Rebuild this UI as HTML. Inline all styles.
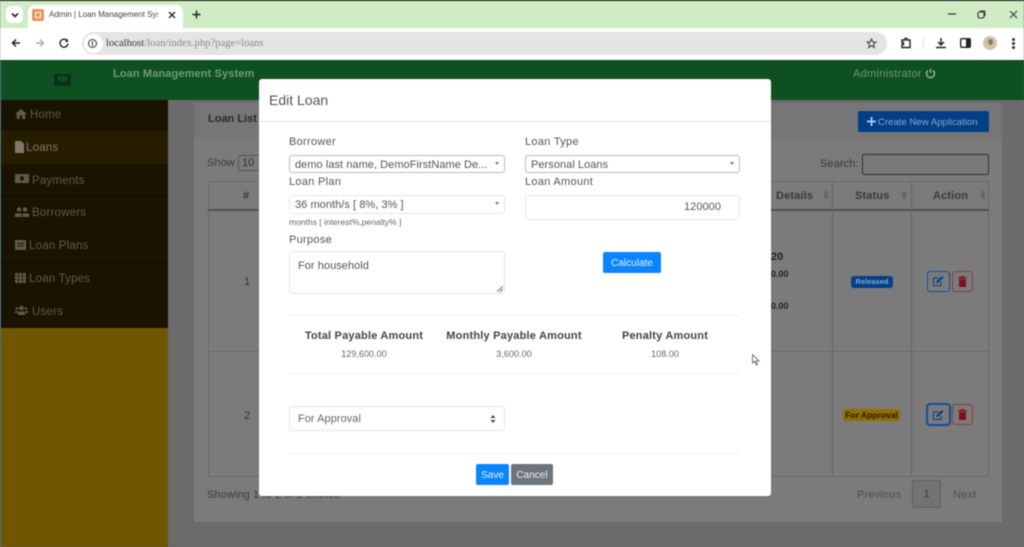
<!DOCTYPE html>
<html lang="en"><head><meta charset="utf-8"><title>Admin | Loan Management System</title>
<style>
html,body{margin:0;padding:0;width:1024px;height:547px;overflow:hidden;background:#6b6b6b}
*{box-sizing:border-box}
body{font-family:"Liberation Sans",sans-serif;position:relative}
.a{position:absolute;white-space:nowrap}
#root{position:absolute;left:0;top:0;width:1024px;height:547px;filter:blur(.45px);overflow:hidden}
.side{left:1px;width:167px;height:33px;background:#1a1300;color:#5f5a4b;font-size:11.5px;font-weight:400;letter-spacing:.2px;line-height:33px}
.side svg{position:absolute;left:14px;top:10px}
.side span{position:absolute;top:0}
.lab{color:#555;font-size:11px;letter-spacing:.3px;line-height:14px}
.in{background:#fff;border:1px solid #e6e6e6;border-radius:3px;color:#555;font-size:11px;letter-spacing:.05px}
.th{color:#3a3a3a;font-weight:700;font-size:11px;letter-spacing:.15px}
.b{font-weight:700;color:#444;font-size:11px;letter-spacing:.2px;text-align:center}
.n{color:#666;font-size:9px;text-align:center;letter-spacing:.05px}
.v{background:#666;width:1px}
.h{background:#f0f0f0;height:1px}
.caret{width:0;height:0;border-left:2.5px solid transparent;border-right:2.5px solid transparent;border-top:3px solid #777}
</style></head><body><div id="root">

<!-- Browser chrome -->
<div class="a" style="left:0;top:0;width:1024px;height:1px;background:#222"></div>
<div class="a" style="left:0;top:1px;width:1024px;height:27px;background:#cfecc4"></div>
<div class="a" style="left:6px;top:6px;width:17px;height:17px;background:#fff;border-radius:5px"></div>
<svg class="a" style="left:11px;top:12px" width="8" height="6" viewBox="0 0 8 6"><path d="M1 1.5L4 4.5L7 1.5" fill="none" stroke="#222" stroke-width="1.6"/></svg>
<div class="a" style="left:28px;top:5px;width:155px;height:24px;background:#fff;border-radius:7px 7px 0 0"></div>
<div class="a" style="left:32px;top:9px;width:12px;height:12px;background:#e8935a;border-radius:2px"></div>
<div class="a" style="left:35px;top:12px;width:6px;height:6px;border:1px solid #fff"></div>
<div class="a" style="left:49px;top:9px;width:109px;overflow:hidden;font-size:8px;line-height:12px;color:#444">Admin | Loan Management System</div>
<svg class="a" style="left:168px;top:11px" width="8" height="8" viewBox="0 0 8 8"><path d="M1 1L7 7M7 1L1 7" stroke="#222" stroke-width="1.3"/></svg>
<svg class="a" style="left:192px;top:10px" width="9" height="9" viewBox="0 0 9 9"><path d="M4.5 .5V8.5M.5 4.5H8.5" stroke="#222" stroke-width="1.4"/></svg>
<svg class="a" style="left:948px;top:13px" width="8" height="2"><path d="M0 1H8" stroke="#333" stroke-width="1.2"/></svg>
<svg class="a" style="left:977px;top:10px" width="9" height="9" viewBox="0 0 9 9"><rect x="1" y="2" width="6" height="6" rx="1.5" fill="none" stroke="#333" stroke-width="1.1"/><path d="M3 1H8V6" fill="none" stroke="#333" stroke-width=".9"/></svg>
<svg class="a" style="left:1009px;top:10px" width="9" height="9" viewBox="0 0 9 9"><path d="M1 1L8 8M8 1L1 8" stroke="#333" stroke-width="1"/></svg>

<div class="a" style="left:0;top:28px;width:1024px;height:32px;background:#fff"></div>
<svg class="a" style="left:11px;top:38px" width="10" height="10" viewBox="0 0 10 10"><path d="M9 5H1.5M5 1.5L1.5 5L5 8.5" fill="none" stroke="#222" stroke-width="1.5"/></svg>
<svg class="a" style="left:35px;top:38px" width="10" height="10" viewBox="0 0 10 10"><path d="M1 5H8.5M5 1.5L8.5 5L5 8.5" fill="none" stroke="#aaa" stroke-width="1.4"/></svg>
<svg class="a" style="left:59px;top:38px" width="10" height="10" viewBox="0 0 10 10"><path d="M8.5 3.2A4 4 0 1 0 9 5.5" fill="none" stroke="#222" stroke-width="1.4"/><path d="M9 .8V4H5.8Z" fill="#222"/></svg>
<div class="a" style="left:82px;top:32px;width:805px;height:23px;background:#e3e5e3;border-radius:12px"></div>
<div class="a" style="left:84px;top:34px;width:19px;height:19px;background:#fff;border-radius:50%"></div>
<div class="a" style="left:88px;top:39px;width:9px;height:9px;border:1.2px solid #333;border-radius:50%"></div>
<div class="a" style="left:92px;top:41px;width:1px;height:5px;background:#333"></div>
<div class="a" style="left:106px;top:38px;font-family:'Liberation Serif',serif;font-size:10.6px;line-height:12px;color:#888"><span style="color:#333">localhost</span>/loan/index.php?page=loans</div>
<svg class="a" style="left:866px;top:38px" width="11" height="11" viewBox="0 0 11 11"><path d="M5.5 1L6.8 4H10L7.5 6.1L8.3 9.5L5.5 7.7L2.7 9.5L3.5 6.1L1 4H4.2Z" fill="none" stroke="#444" stroke-width="1.1"/></svg>
<svg class="a" style="left:900px;top:37px" width="12" height="12" viewBox="0 0 12 12"><path d="M2 3H5V1.5H7V3H10V10.5H2V7.5H3.5V5.5H2Z" fill="none" stroke="#222" stroke-width="1.4"/></svg>
<div class="a" style="left:923px;top:38px;width:1px;height:10px;background:#ddd"></div>
<svg class="a" style="left:935px;top:37px" width="12" height="12" viewBox="0 0 12 12"><path d="M6 1V7.5M3 5L6 8L9 5M1 10.5H11" fill="none" stroke="#222" stroke-width="1.5"/></svg>
<svg class="a" style="left:960px;top:38px" width="11" height="10" viewBox="0 0 11 10"><rect x=".7" y=".7" width="9.6" height="8.6" rx="1" fill="#fff" stroke="#222" stroke-width="1.4"/><rect x="6" y="1" width="4" height="8" fill="#222"/></svg>
<div class="a" style="left:983px;top:36px;width:14px;height:14px;border-radius:50%;background:#cfc4a8"></div>
<div class="a" style="left:988px;top:39px;width:5px;height:6px;border-radius:50%;background:#8b7b66"></div>
<div class="a" style="left:1012px;top:38px;width:3px;height:3px;border-radius:50%;background:#333"></div>
<div class="a" style="left:1012px;top:42px;width:3px;height:3px;border-radius:50%;background:#333"></div>
<div class="a" style="left:1012px;top:46px;width:3px;height:3px;border-radius:50%;background:#333"></div>

<!-- App backdrop -->
<div class="a" style="left:0;top:60px;width:1024px;height:487px;background:#6b6b6b"></div>
<div class="a" style="left:0;top:60px;width:1024px;height:40px;background:#0f5020"></div>
<div class="a" style="left:54px;top:74px;width:17px;height:12px;background:#06331a;border-radius:2px;color:#2f6a44;font-size:6px;line-height:12px;text-align:center">$$$</div>
<div class="a" style="left:113px;top:67px;font-size:11px;line-height:14px;font-weight:700;color:#6f9a7a;letter-spacing:.12px">Loan Management System</div>
<div class="a" style="left:853px;top:67px;font-size:11px;line-height:14px;color:#6f9a7a;letter-spacing:.3px">Administrator</div>
<svg class="a" style="left:925px;top:68px" width="11" height="11" viewBox="0 0 11 11"><path d="M3 2.5A4 4 0 1 0 8 2.5M5.5 .8V5" fill="none" stroke="#8fb39a" stroke-width="1.5"/></svg>

<!-- Sidebar -->
<div class="a" style="left:1px;top:100px;width:167px;height:228px;background:#1a1300"></div>
<div class="a side" style="top:100px;height:31px;line-height:31px"><svg style="top:9px" width="12" height="10" viewBox="0 0 12 10"><path d="M6 0L12 5H10.3V10H7.2V6.5H4.8V10H1.7V5H0Z" fill="#5f5a4b"/></svg><span style="left:29px">Home</span></div>
<div class="a side" style="top:131px;background:#261c00;color:#80796a;line-height:34px"><svg style="left:14px" width="9" height="12" viewBox="0 0 9 12"><path d="M0 0H6L9 3V12H0Z" fill="#80796a"/></svg><span style="left:25px">Loans</span></div>
<div class="a side" style="top:164px;line-height:34px"><svg width="14" height="9" viewBox="0 0 14 9"><rect width="14" height="9" fill="#5f5a4b"/><circle cx="7" cy="4.5" r="2.2" fill="#1a1300"/></svg><span style="left:31px">Payments</span></div>
<div class="a side" style="top:197px;line-height:32px"><svg width="14" height="10" viewBox="0 0 14 10"><circle cx="4" cy="2.5" r="2.2" fill="#5f5a4b"/><circle cx="10" cy="2.5" r="2.2" fill="#5f5a4b"/><path d="M0 10V6.5H6.5V10ZM7.5 10V6.5H14V10Z" fill="#5f5a4b"/></svg><span style="left:31px">Borrowers</span></div>
<div class="a side" style="top:230px;line-height:32px"><svg width="11" height="10" viewBox="0 0 11 10"><path d="M0 0H11V10H0ZM2 3V4H9V3ZM2 5.5V6.5H9V5.5Z" fill="#5f5a4b" fill-rule="evenodd"/></svg><span style="left:28px">Loan Plans</span></div>
<div class="a side" style="top:263px;line-height:32px"><svg width="11" height="10" viewBox="0 0 11 10"><path d="M0 0H3.2V3H0ZM3.9 0H7.1V3H3.9ZM7.8 0H11V3H7.8ZM0 3.5H3.2V6.5H0ZM3.9 3.5H7.1V6.5H3.9ZM7.8 3.5H11V6.5H7.8ZM0 7H3.2V10H0ZM3.9 7H7.1V10H3.9ZM7.8 7H11V10H7.8Z" fill="#5f5a4b"/></svg><span style="left:28px">Loan Types</span></div>
<div class="a side" style="top:295px;line-height:34px"><svg width="13" height="10" viewBox="0 0 13 10"><circle cx="6.5" cy="3" r="2.3" fill="#5f5a4b"/><circle cx="2" cy="3.5" r="1.4" fill="#5f5a4b"/><circle cx="11" cy="3.5" r="1.4" fill="#5f5a4b"/><path d="M3 10V6.5H10V10ZM0 8V6H2.5V8ZM10.5 8V6H13V8Z" fill="#5f5a4b"/></svg><span style="left:31px">Users</span></div>
<div class="a" style="left:1px;top:196px;width:167px;height:1px;background:#0d0900"></div>
<div class="a" style="left:1px;top:262px;width:167px;height:1px;background:#0d0900"></div>
<div class="a" style="left:1px;top:328px;width:167px;height:219px;background:#705600"></div>
<div class="a" style="left:0;top:60px;width:1px;height:487px;background:#4a6a8a"></div>

<!-- Card behind modal -->
<div class="a" style="left:194px;top:103px;width:808px;height:419px;background:#7b7b7b"></div>
<div class="a" style="left:194px;top:103px;width:808px;height:37px;background:#767676"></div>
<div class="a" style="left:208px;top:112px;font-size:11px;line-height:14px;font-weight:700;color:#2a2a2a">Loan List</div>
<div class="a" style="left:858px;top:111px;width:131px;height:21px;background:#033f85;border-radius:2px"></div>
<svg class="a" style="left:867px;top:117px" width="9" height="9" viewBox="0 0 9 9"><path d="M4.5 0V9M0 4.5H9" stroke="#9dc0e6" stroke-width="2"/></svg>
<div class="a" style="left:878px;top:116px;font-size:9.6px;line-height:14px;color:#86a9d0">Create New Application</div>
<div class="a" style="left:207px;top:156px;font-size:11px;line-height:14px;color:#3c3c3c;letter-spacing:.1px">Show</div>
<div class="a" style="left:238px;top:155px;width:30px;height:16px;border:1px solid #555;border-radius:2px;font-size:11px;line-height:14px;color:#333;padding-left:3px">10</div>
<div class="a" style="left:820px;top:157px;font-size:11px;line-height:14px;color:#383838;letter-spacing:.1px">Search:</div>
<div class="a" style="left:862px;top:154px;width:127px;height:21px;border:1.4px solid #333;border-radius:2px;background:#797979"></div>

<!-- Table -->
<div class="a" style="left:208px;top:181px;width:781px;height:296px;border:1px solid #696969"></div>
<div class="a" style="left:208px;top:209px;width:781px;height:2px;background:#505050"></div>
<div class="a" style="left:208px;top:351px;width:781px;height:1px;background:#696969"></div>
<div class="a v" style="left:832px;top:181px;height:296px"></div>
<div class="a v" style="left:911px;top:181px;height:296px"></div>
<div class="a th" style="left:243px;top:189px;line-height:14px">#</div>
<div class="a th" style="left:776px;top:189px;line-height:14px">Details</div>
<div class="a th" style="left:855px;top:189px;line-height:14px">Status</div>
<div class="a th" style="left:933px;top:189px;line-height:14px">Action</div>
<div class="a" style="left:824px;top:191px;width:4px;height:8px;background:#676767;border-radius:2px"></div>
<div class="a" style="left:902px;top:191px;width:4px;height:8px;background:#676767;border-radius:2px"></div>
<div class="a" style="left:981px;top:191px;width:4px;height:8px;background:#676767;border-radius:2px"></div>
<div class="a" style="left:244px;top:275px;font-size:11px;line-height:14px;color:#333">1</div>
<div class="a" style="left:244px;top:409px;font-size:11px;line-height:14px;color:#333">2</div>
<div class="a" style="left:771px;top:250px;font-size:11px;line-height:14px;color:#222;font-weight:700">20</div>
<div class="a" style="left:771px;top:268px;font-size:9px;line-height:12px;color:#222;font-weight:700">0.00</div>
<div class="a" style="left:771px;top:300px;font-size:9px;line-height:12px;color:#222;font-weight:700">0.00</div>
<div class="a" style="left:851px;top:276px;width:42px;height:12px;background:#033f85;border-radius:3px;color:#86a9d0;font-size:7.5px;line-height:12px;font-weight:700;text-align:center">Released</div>
<div class="a" style="left:843px;top:409px;width:57px;height:12px;background:#8f6f00;border-radius:3px;color:#1d1a0a;font-size:8.5px;line-height:12px;font-weight:700;text-align:center">For Approval</div>

<div class="a" style="left:927px;top:271px;width:23px;height:21px;border:1px solid #0a4f9c;border-radius:3px"></div>
<svg class="a" style="left:933px;top:276px" width="11" height="10" viewBox="0 0 11 10"><path d="M0 1.5H6L5 2.5H1V9H7.5V6L8.5 5V10H0Z" fill="#033f85"/><path d="M3.5 5L9 0L10.5 1.5L5 7H3.5Z" fill="#033f85"/></svg>
<div class="a" style="left:952px;top:271px;width:21px;height:21px;border:1px solid #8a3843;border-radius:3px"></div>
<svg class="a" style="left:958px;top:276px" width="9" height="11" viewBox="0 0 9 11"><path d="M0 1.2H3V0H6V1.2H9V2.5H0ZM1 3H8V11H1Z" fill="#7f1020"/></svg>
<div class="a" style="left:926px;top:403px;width:25px;height:23px;border:2px solid #0a4f9c;border-radius:4px"></div>
<svg class="a" style="left:933px;top:410px" width="11" height="10" viewBox="0 0 11 10"><path d="M0 1.5H6L5 2.5H1V9H7.5V6L8.5 5V10H0Z" fill="#033f85"/><path d="M3.5 5L9 0L10.5 1.5L5 7H3.5Z" fill="#033f85"/></svg>
<div class="a" style="left:952px;top:404px;width:21px;height:21px;border:1px solid #8a3843;border-radius:3px"></div>
<svg class="a" style="left:958px;top:409px" width="9" height="11" viewBox="0 0 9 11"><path d="M0 1.2H3V0H6V1.2H9V2.5H0ZM1 3H8V11H1Z" fill="#7f1020"/></svg>

<div class="a" style="left:207px;top:488px;font-size:11px;line-height:14px;color:#3c3c3c;letter-spacing:.1px">Showing 1 to 2 of 2 entries</div>
<div class="a" style="left:857px;top:488px;font-size:11px;line-height:14px;color:#4f4f4f;letter-spacing:.2px">Previous</div>
<div class="a" style="left:912px;top:480px;width:29px;height:28px;background:#737373;border:1px solid #5f5f5f;border-radius:2px;font-size:11px;line-height:27px;text-align:center;color:#3d3d3d">1</div>
<div class="a" style="left:953px;top:488px;font-size:11px;line-height:14px;color:#4f4f4f;letter-spacing:.2px">Next</div>

<!-- Modal -->
<div class="a" style="left:259px;top:79px;width:512px;height:417px;background:#fff;border-radius:3px"></div>
<div class="a" style="left:269px;top:92px;font-size:14px;line-height:17px;color:#555">Edit Loan</div>
<div class="a" style="left:259px;top:121px;width:512px;height:1px;background:#e3e3e3"></div>

<div class="a lab" style="left:289px;top:135px">Borrower</div>
<div class="a in" style="left:289px;top:155px;width:216px;height:18px;border-color:#bbb;line-height:18px;padding-left:5px">demo last name, DemoFirstName De...</div>
<div class="a caret" style="left:495px;top:162px"></div>
<div class="a lab" style="left:289px;top:175px">Loan Plan</div>
<div class="a in" style="left:289px;top:195px;width:216px;height:19px;line-height:18px;padding-left:5px">36 month/s [ 8%, 3% ]</div>
<div class="a caret" style="left:495px;top:202px"></div>
<div class="a" style="left:289px;top:217px;font-size:8.5px;line-height:11px;color:#666">months [ interest%,penalty% ]</div>
<div class="a lab" style="left:289px;top:233px">Purpose</div>
<div class="a in" style="left:289px;top:251px;width:216px;height:43px;padding:8px 8px;line-height:13px">For household</div>
<svg class="a" style="left:497px;top:286px" width="6" height="6" viewBox="0 0 6 6"><path d="M0 6L6 0M3 6L6 3" stroke="#666" stroke-width=".9"/></svg>

<div class="a lab" style="left:525px;top:135px">Loan Type</div>
<div class="a in" style="left:525px;top:155px;width:215px;height:18px;border-color:#bbb;line-height:18px;padding-left:5px">Personal Loans</div>
<div class="a caret" style="left:730px;top:162px"></div>
<div class="a lab" style="left:525px;top:175px">Loan Amount</div>
<div class="a in" style="left:525px;top:195px;width:215px;height:25px;line-height:23px;text-align:right;padding-right:18px">120000</div>
<div class="a" style="left:603px;top:252px;width:58px;height:21px;background:#0a84ff;border-radius:2px;color:#e8f3ff;font-size:10px;line-height:23px;text-align:center">Calculate</div>

<div class="a h" style="left:289px;top:315px;width:451px"></div>
<div class="a b" style="left:289px;top:329px;width:150px;line-height:14px">Total Payable Amount</div>
<div class="a n" style="left:289px;top:348px;width:150px;line-height:12px">129,600.00</div>
<div class="a b" style="left:439px;top:329px;width:150px;line-height:14px">Monthly Payable Amount</div>
<div class="a n" style="left:439px;top:348px;width:150px;line-height:12px">3,600.00</div>
<div class="a b" style="left:590px;top:329px;width:150px;line-height:14px">Penalty Amount</div>
<div class="a n" style="left:590px;top:348px;width:150px;line-height:12px">108.00</div>
<div class="a h" style="left:289px;top:373px;width:451px"></div>

<div class="a in" style="left:289px;top:406px;width:216px;height:25px;line-height:24px;padding-left:8px;color:#666">For Approval</div>
<svg class="a" style="left:490px;top:415px" width="6" height="8" viewBox="0 0 6 8"><path d="M3 0L5.5 3H.5ZM3 8L.5 5H5.5Z" fill="#444"/></svg>
<div class="a h" style="left:289px;top:453px;width:451px"></div>
<div class="a" style="left:476px;top:464px;width:33px;height:21px;background:#0a84ff;border-radius:2px;color:#e8f3ff;font-size:10px;line-height:23px;text-align:center">Save</div>
<div class="a" style="left:511px;top:464px;width:42px;height:21px;background:#6c757d;border-radius:2px;color:#eee;font-size:10px;line-height:23px;text-align:center">Cancel</div>

<!-- Cursor -->
<svg class="a" style="left:752px;top:354px" width="8" height="12" viewBox="0 0 8 12"><path d="M.5 .5V9L2.6 7.4L4.2 11L5.6 10.3L4 7H7Z" fill="#fff" stroke="#555" stroke-width=".8"/></svg>
</div></body></html>
